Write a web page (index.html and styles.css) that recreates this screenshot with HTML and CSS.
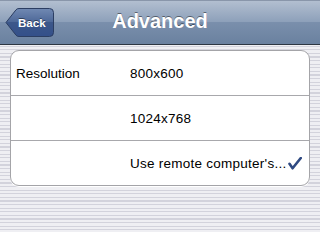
FILE: index.html
```html
<!DOCTYPE html>
<html>
<head>
<meta charset="utf-8">
<link rel="stylesheet" href="styles.css">
</head>
<body>
<div class="screen">
  <header class="navbar">
    <div class="nav-left">
      <button class="back">
        <svg class="back-shape" width="49" height="29" viewBox="0 0 49 29">
          <defs>
            <linearGradient id="bg" x1="0" y1="0" x2="0" y2="1">
              <stop offset="0" stop-color="#7189b3"/>
              <stop offset="0.5" stop-color="#4c6797"/>
              <stop offset="0.5" stop-color="#3c578a"/>
              <stop offset="1" stop-color="#34508a"/>
            </linearGradient>
          </defs>
          <path d="M1 14.5 L11 1.8 Q12 0.5 14 0.5 L44.5 0.5 Q48.5 0.5 48.5 4.5 L48.5 24.5 Q48.5 28.5 44.5 28.5 L14 28.5 Q12 28.5 11 27.2 Z" fill="url(#bg)" stroke="#2c3e62" stroke-width="1"/>
        </svg>
        <span class="back-label">Back</span>
      </button>
    </div>
    <h1 class="title">Advanced</h1>
    <div class="nav-right"></div>
  </header>
  <main class="content">
    <section class="group">
      <div class="row">
        <span class="label">Resolution</span>
        <span class="value">800x600</span>
      </div>
      <div class="row">
        <span class="label"></span>
        <span class="value">1024x768</span>
      </div>
      <div class="row">
        <span class="label"></span>
        <span class="value">Use remote computer's...</span>
        <svg class="check" width="14" height="13" viewBox="0 0 14 13">
          <path d="M1.5 6.8 L4.6 11.3 L12.8 1" fill="none" stroke="#2f4a82" stroke-width="2.6" stroke-linecap="round" stroke-linejoin="round"/>
        </svg>
      </div>
    </section>
  </main>
</div>
</body>
</html>
```
FILE: styles.css
```css
* { box-sizing: border-box; }
html, body {
  margin: 0;
  padding: 0;
}
body {
  width: 320px;
  height: 232px;
  overflow: hidden;
  font-family: "Liberation Sans", Arial, sans-serif;
}
.screen {
  width: 320px;
  height: 232px;
  display: flex;
  flex-direction: column;
  background-color: #f0f0f4;
  background-image: repeating-linear-gradient(to bottom, #efeff3 0px, #efeff3 2.5px, #d3d3dc 2.5px, #d3d3dc 3.6px);
}
.navbar {
  height: 45px;
  flex: none;
  display: grid;
  grid-template-columns: 1fr auto 1fr;
  align-items: center;
  background: linear-gradient(to bottom, #b2bfd0 0%, #8c9fb9 50%, #7a8fac 50%, #6a819f 100%);
  border-top: 1px solid #8996aa;
  border-bottom: 1px solid #2d3642;
}
.nav-left {
  padding-left: 5px;
  display: flex;
  align-items: center;
}
.back {
  position: relative;
  width: 49px;
  height: 29px;
  padding: 0 0 0 13px;
  border: none;
  background: none;
  display: flex;
  align-items: center;
  font-family: "Liberation Sans", Arial, sans-serif;
}
.back-shape {
  position: absolute;
  left: 0;
  top: 0;
}
.back-label {
  position: relative;
  color: #fff;
  font-weight: bold;
  font-size: 11.6px;
  text-shadow: 0 -1px 0 rgba(0,0,0,0.45);
}
.title {
  margin: 0;
  color: #fff;
  font-size: 20px;
  font-weight: bold;
  text-shadow: 0 -1px 0 rgba(0,0,0,0.45);
  padding-bottom: 2px;
}
.content {
  padding: 5px 10px 0 10px;
}
.group {
  background: #fff;
  border: 1px solid #a4a4a8;
  border-radius: 9px;
  box-shadow: 0 1px 0 #fff;
}
.row {
  height: 45px;
  display: flex;
  align-items: center;
  padding: 0 7px 0 5px;
  border-top: 1px solid #a8a8ac;
  font-size: 13.5px;
  color: #000;
}
.row:first-child {
  border-top: none;
  height: 44px;
}
.label {
  width: 114px;
  flex: none;
}
.value {
  flex: 1;
  min-width: 0;
  white-space: nowrap;
  letter-spacing: 0.25px;
}
.check {
  flex: none;
  margin-left: 1px;
}
```
